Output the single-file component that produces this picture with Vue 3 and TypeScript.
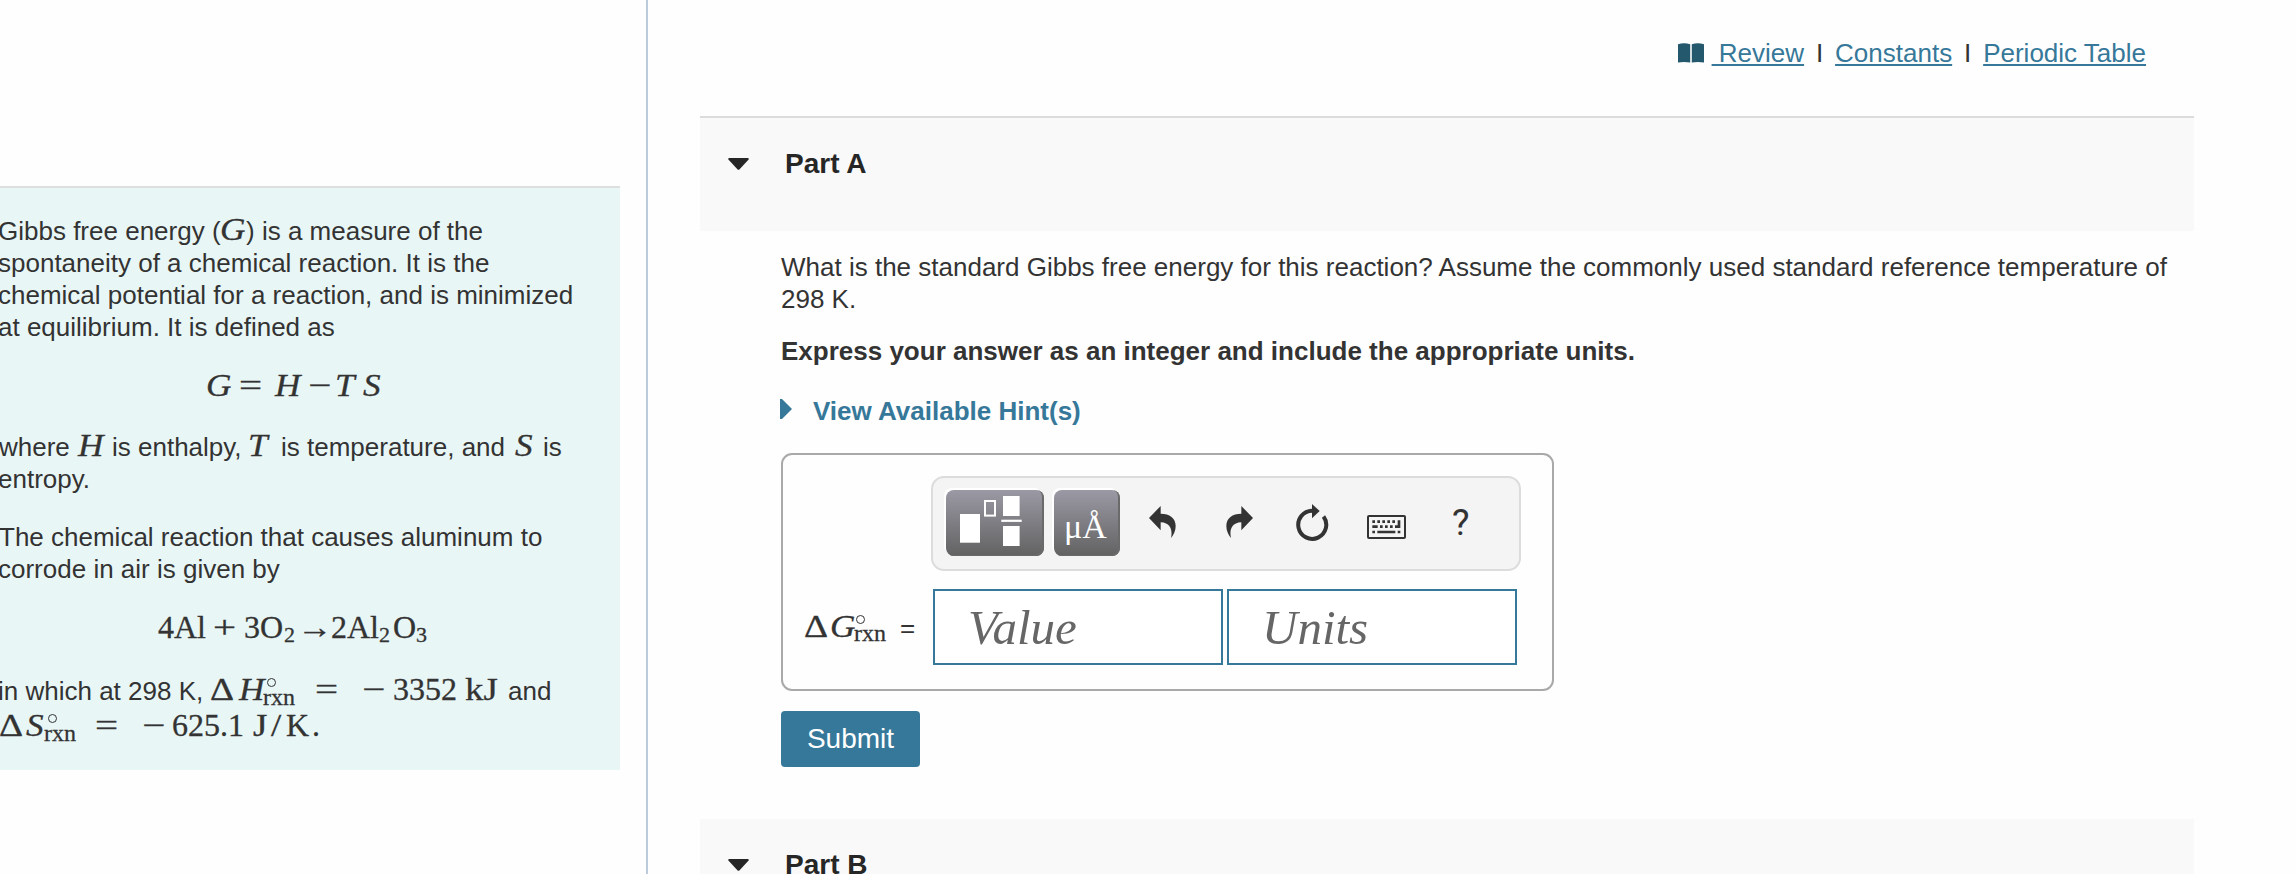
<script setup lang="ts">
type Kind = 'text' | 'it' | 'rm' | 'wide' | 'op' | 'delta' | 'sub' | 'arrow' | 'rxn'
type Segment = [start: number, text: string, kind: Kind]

interface Line {
  gap: number
  segments: Segment[]
}

const intro: Line[] = [
  { gap: 0, segments: [[-2, 'Gibbs free energy (', 'text'], [220, 'G', 'it'], [246, ') is a measure of the', 'text']] },
  { gap: 0, segments: [[-2, 'spontaneity of a chemical reaction. It is the', 'text']] },
  { gap: 0, segments: [[-2, 'chemical potential for a reaction, and is minimized', 'text']] },
  { gap: 0, segments: [[-2, 'at equilibrium. It is defined as', 'text']] },
  {
    gap: 28,
    segments: [[206, 'G', 'it'], [239, '=', 'op'], [275, 'H', 'it'], [308, '−', 'op'], [335, 'T', 'it'], [363, 'S', 'it']],
  },
  {
    gap: 28,
    segments: [
      [-1, 'where', 'text'], [78, 'H', 'it'], [112, 'is enthalpy,', 'text'], [248, 'T', 'it'],
      [281, 'is temperature, and', 'text'], [515, 'S', 'it'], [543, 'is', 'text'],
    ],
  },
  { gap: 0, segments: [[-2, 'entropy.', 'text']] },
  { gap: 26, segments: [[-1, 'The chemical reaction that causes aluminum to', 'text']] },
  { gap: 0, segments: [[-2, 'corrode in air is given by', 'text']] },
  {
    gap: 28,
    segments: [
      [158, '4Al', 'rm'], [213, '+', 'op'], [244, '3O', 'rm'], [284, '2', 'sub'], [297, '→', 'arrow'],
      [331, '2Al', 'rm'], [379, '2', 'sub'], [393, 'O', 'rm'], [416, '3', 'sub'],
    ],
  },
  {
    gap: 30,
    segments: [
      [-2, 'in which at 298 K,', 'text'], [210, 'Δ', 'delta'], [239, 'H', 'it'], [263, 'rxn', 'rxn'], [315, '=', 'op'],
      [362, '−', 'op'], [393, '3352', 'rm'], [465, 'kJ', 'wide'], [508, 'and', 'text'],
    ],
  },
  {
    gap: 4,
    segments: [
      [-1, 'Δ', 'delta'], [26, 'S', 'it'], [44, 'rxn', 'rxn'], [95, '=', 'op'], [142, '−', 'op'],
      [172, '625.1', 'rm'], [253, 'J', 'wide'], [271, '/', 'wide'], [286, 'K', 'rm'], [312, '.', 'rm'],
    ],
  },
]

const segmentStyle = (line: Line, i: number) => {
  const [start] = line.segments[i]
  const next = line.segments[i + 1]
  return {
    marginLeft: i === 0 ? `${start}px` : undefined,
    width: next ? `${next[0] - start}px` : undefined,
  }
}
</script>

<template>
  <div class="page">
    <aside class="side">
      <div class="intro">
        <div v-for="(line, n) in intro" :key="n" class="line" :style="{ marginTop: line.gap + 'px' }">
          <span
            v-for="(seg, i) in line.segments"
            :key="i"
            class="seg"
            :class="seg[2]"
            :style="segmentStyle(line, i)"
          ><i v-if="seg[2] === 'rxn'" class="ring"></i><b>{{ seg[1] }}</b></span>
        </div>
      </div>
    </aside>

    <main class="main">
      <nav class="links">
        <svg class="book" width="26" height="20" viewBox="0 0 26 20">
          <path d="M0 1.2Q6 -.8 12.2 1.2V19.5Q6 18.300 0 19.5ZM13.8 1.2Q20 -.8 26 1.2V19.5Q20 18.300 13.8 19.5Z" fill="#24586d" />
        </svg>
        <a class="review">&nbsp;Review</a>
        <span class="bar">I</span>
        <a class="constants">Constants</a>
        <span class="bar">I</span>
        <a>Periodic Table</a>
      </nav>

      <header class="part first">
        <svg width="21" height="12" viewBox="0 0 21 12"><path d="M1 0H20Q21.4 .6 20.4 1.8L11.6 11.2Q10.5 12.2 9.4 11.2L.6 1.8Q-.4 .6 1 0Z" fill="#262626" /></svg>
        <h2>Part A</h2>
      </header>

      <section class="body">
        <p class="question">What is the standard Gibbs free energy for this reaction? Assume the commonly used standard reference temperature of<br />298 K.</p>
        <p class="instruction">Express your answer as an integer and include the appropriate units.</p>
        <div class="hints">
          <svg width="12" height="20" viewBox="0 0 12 20"><path d="M0 0H2L12 10L2 20H0Z" fill="#367899" /></svg>
          <span>View Available Hint(s)</span>
        </div>

        <div class="answer">
          <div class="toolbar">
            <button class="key wide-key">
              <svg width="98" height="66" viewBox="0 0 98 66" fill="#fff">
                <rect x="14" y="24" width="20" height="28.7" />
                <rect x="39" y="11" width="10" height="14.6" fill="none" stroke="#fff" stroke-width="2" />
                <rect x="57" y="6" width="16.6" height="20" />
                <rect x="55.3" y="29.7" width="20.4" height="2.2" />
                <rect x="57" y="36" width="16.6" height="20" />
              </svg>
            </button>
            <button class="key units-key">μÅ</button>
            <svg class="undo" width="27" height="32" viewBox="0 0 81 96" fill="#333"><path d="M0 36L35 0V23C62 23 80 36 80 60C80 74 74 87 66 96C70 80 69 50 35 49V73Z" /></svg>
            <svg class="redo" width="27" height="32" viewBox="0 0 81 96" fill="#333"><path d="M81 36L46 0V23C19 23 1 36 1 60C1 74 7 87 15 96C11 80 12 50 46 49V73Z" /></svg>
            <svg class="reset" width="33" height="37" viewBox="0 0 99 111">
              <path d="M48.500 20.500A42 42 0 1 0 82.500 37.500" fill="none" stroke="#333" stroke-width="12" />
              <path d="M48 0L71 21L48 43Z" fill="#333" />
            </svg>
            <svg class="keyboard" width="39" height="24" viewBox="0 0 117 72" fill="#333">
              <rect x="3" y="3" width="111" height="66" rx="3" fill="none" stroke="#333" stroke-width="6" />
              <path d="M16 16h8v8h-8zM31 16h8v8h-8zM46 16h8v8h-8zM61 16h8v8h-8zM76 16h8v8h-8zM92 16h8v23h-16v-8h8zM16 31h16v8h-16zM39 31h8v8h-8zM54 31h8v8h-8zM69 31h8v8h-8zM16 47h8v8h-8zM31 47h54v8h-54zM92 47h8v8h-8z" />
            </svg>
            <span class="help">?</span>
          </div>

          <div class="entry">
            <div class="label">
              <span class="seg delta"><b>Δ</b></span>
              <span class="seg it"><b>G</b></span>
              <span class="seg rxn"><i class="ring"></i><b>rxn</b></span>
              <span class="eq">=</span>
            </div>
            <div class="field value">Value</div>
            <div class="field units">Units</div>
          </div>
        </div>

        <button class="submit">Submit</button>
      </section>

      <header class="part second">
        <svg width="21" height="12" viewBox="0 0 21 12"><path d="M1 0H20Q21.4 .6 20.4 1.8L11.6 11.2Q10.5 12.2 9.4 11.2L.6 1.8Q-.4 .6 1 0Z" fill="#262626" /></svg>
        <h2>Part B</h2>
      </header>
    </main>
  </div>
</template>

<style>
body {
  margin: 0;
  background: #fff;
}
</style>

<style scoped>
.page {
  box-sizing: border-box;
  width: 2296px;
  height: 874px;
  overflow: hidden;
  display: flex;
  color: #333;
  background: #fefefe;
  font: 26px/32px "Liberation Sans", Arial, sans-serif;
}
.page * {
  box-sizing: border-box;
}
.side {
  flex: none;
  width: 648px;
  border-right: 2px solid #bccbdc;
  padding-top: 186px;
}
.intro {
  width: 620px;
  height: 584px;
  padding-top: 27px;
  border-top: 2px solid #dcdfde;
  background: #e9f6f6;
}
.line {
  display: flex;
  align-items: baseline;
  height: 32px;
  white-space: nowrap;
}
.seg {
  flex: none;
  display: block;
}
.seg b {
  font-weight: normal;
  display: inline-block;
  transform-origin: left;
}
.it, .rm, .wide, .op, .delta, .sub, .arrow, .rxn {
  font-family: "Liberation Serif", "Times New Roman", serif;
  font-size: 32px;
  line-height: 28px;
  -webkit-text-stroke: 0.3px #333;
}
.it {
  font-style: italic;
}
.it b {
  transform: scaleX(1.1);
}
.wide b {
  transform: scaleX(1.15);
}
.op b {
  transform: scaleX(1.28);
}
.delta b {
  transform: scaleX(1.17);
}
.arrow b {
  transform: scaleX(1.1);
}
.sub {
  font-size: 22px;
  line-height: 14px;
}
.sub b {
  position: relative;
  top: 4px;
}
.rxn {
  position: relative;
  font-size: 24px;
  line-height: 20px;
}
.rxn b {
  position: relative;
  top: 5px;
}
.ring {
  position: absolute;
  left: 4px;
  top: -4px;
  width: 9px;
  height: 9px;
  border: 1.5px solid #333;
  border-radius: 50%;
}
.main {
  width: 1546px;
  padding-left: 52px;
}
.links {
  height: 116px;
  padding-top: 37px;
  display: flex;
  justify-content: flex-end;
  padding-right: 48px;
}
.links a {
  color: #367899;
  text-decoration: underline;
  text-decoration-thickness: 2px;
  text-underline-offset: 2px;
  white-space: pre;
}
.book {
  margin: 6px 8px 0 0;
}
.bar {
  width: 31px;
  text-align: center;
}
.part {
  display: flex;
  background: #f9f9f9;
  padding-left: 28px;
}
.part svg {
  display: block;
}
.part h2 {
  margin: 0 0 0 36px;
  color: #262626;
  font-size: 28px;
  line-height: 32px;
}
.first {
  height: 115px;
  border-top: 2px solid #dcdcdc;
  padding-top: 30px;
}
.first svg, .second svg {
  margin-top: 10px;
}
.second {
  height: 115px;
  padding-top: 30px;
}
.body {
  height: 588px;
  padding: 20px 0 0 81px;
}
.question, .instruction {
  margin: 0;
  white-space: nowrap;
}
.instruction {
  margin-top: 20px;
  font-weight: bold;
}
.hints {
  display: flex;
  margin: 28px 0 26px -1px;
  color: #367899;
  font-weight: bold;
}
.hints svg {
  margin: 4px 21px 0 0;
}
.answer {
  width: 773px;
  height: 238px;
  border: 2px solid #a9a9a9;
  border-radius: 11px;
  padding-top: 21px;
}
.toolbar {
  margin-left: 148px;
  width: 590px;
  height: 95px;
  border: 2px solid #dcdcdc;
  border-radius: 13px;
  background: #f4f4f4;
  padding: 12px 0 0 13px;
  display: flex;
}
.key {
  flex: none;
  height: 66px;
  padding: 0;
  border: 0;
  border-radius: 8px;
  background: linear-gradient(#9b99a4, #626262);
  box-shadow: -2px -2px 0 #fff, inset -2px -1px 0 #6a6a6a;
  color: #fff;
}
.wide-key {
  width: 98px;
}
.wide-key svg {
  display: block;
}
.units-key {
  width: 66px;
  margin-left: 10px;
  padding-right: 3px;
  font: 34px/73px "Liberation Serif", serif;
}
.toolbar > svg {
  flex: none;
}
.undo {
  margin: 16px 0 0 29px;
}
.redo {
  margin: 16px 0 0 50px;
}
.reset {
  margin: 14px 0 0 43px;
}
.keyboard {
  margin: 25px 0 0 38px;
}
.help {
  margin: 13px 0 0 46px;
  font: 37px/40px Roboto, sans-serif;
}
.entry {
  display: flex;
  margin-top: 18px;
}
.label {
  width: 150px;
  padding: 23px 0 0 21px;
  display: flex;
  align-items: baseline;
}
.label .delta {
  width: 26px;
}
.label .it {
  width: 24px;
}
.label .rxn {
  width: 46px;
}
.label .rxn b {
  top: 4px;
}
.label .ring {
  left: 2px;
  top: -4px;
}
.eq {
  font-size: 26px;
}
.field {
  width: 290px;
  height: 76px;
  border: 2px solid #367899;
  background: #fff;
  color: #666;
  font: italic 49px/73px "Liberation Serif", serif;
  padding-left: 33px;
}
.units {
  margin-left: 4px;
}
.submit {
  display: block;
  width: 139px;
  height: 56px;
  margin-top: 20px;
  padding: 0;
  border: 0;
  border-radius: 4px;
  background: #367899;
  color: #fff;
  font: 28px/56px "Liberation Sans", Arial, sans-serif;
}
</style>
